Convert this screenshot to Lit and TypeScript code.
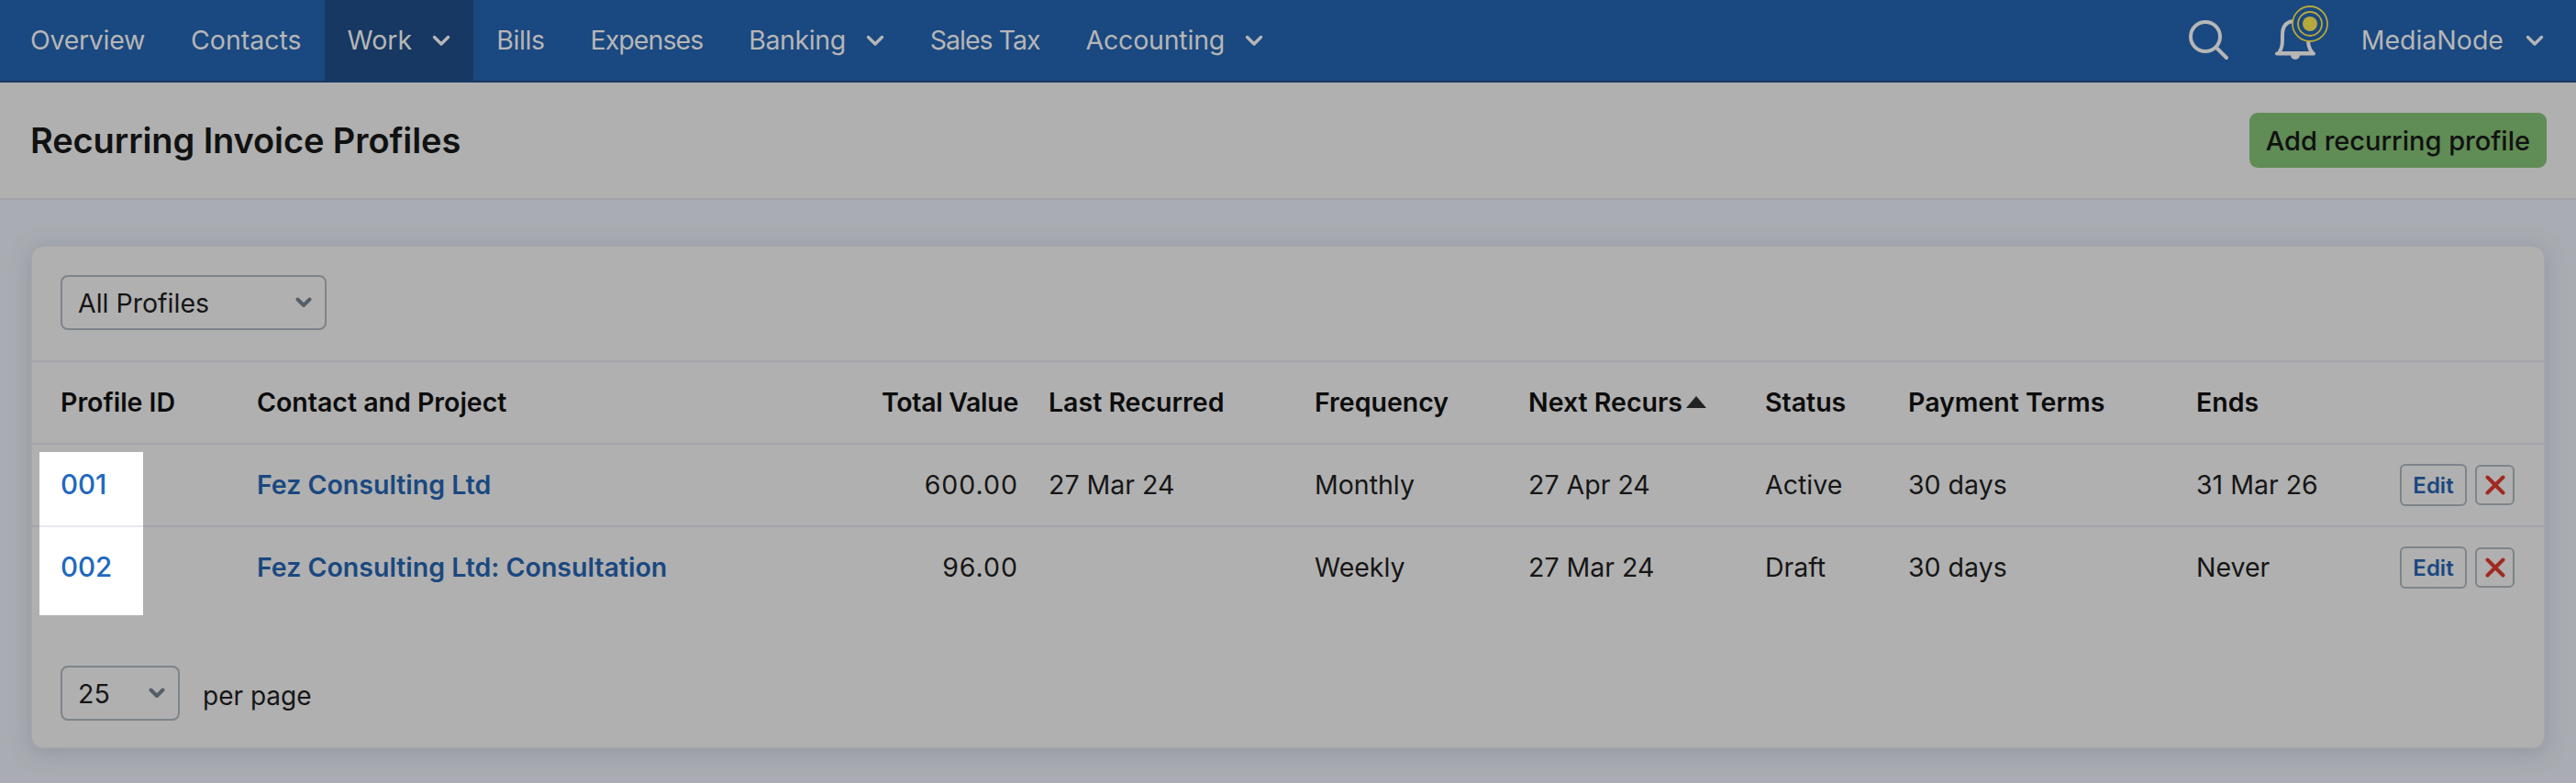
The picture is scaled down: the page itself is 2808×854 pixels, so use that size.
import { LitElement, html, css, svg } from "lit";
import { customElement } from "lit/decorators.js";

const chev = () => html`<svg class="chev" viewBox="0 0 20 13" width="20" height="13"><path d="M2.5 2.5 L10 10 L17.5 2.5" fill="none" stroke="currentColor" stroke-width="3.4" stroke-linecap="round" stroke-linejoin="round"/></svg>`;
const selChev = () => html`<svg class="selchev" viewBox="0 0 18 12" width="18" height="12"><path d="M2.5 2.5 L9 9 L15.5 2.5" fill="none" stroke="currentColor" stroke-width="4" stroke-linecap="round" stroke-linejoin="round"/></svg>`;

const nav = [
  { t: "Overview", ls: -0.3 }, { t: "Contacts", ls: 0 }, { t: "Work", c: true, a: true, ls: 0 }, { t: "Bills", ls: -0.4 },
  { t: "Expenses", ls: -0.95 }, { t: "Banking", c: true, ls: -0.4 }, { t: "Sales Tax", ls: -1 }, { t: "Accounting", c: true, ls: -0.2 },
];

const rows = [
  { id: "001", contact: "Fez Consulting Ltd", total: "600.00", last: "27 Mar 24", freq: "Monthly", next: "27 Apr 24", status: "Active", terms: "30 days", ends: "31 Mar 26" },
  { id: "002", contact: "Fez Consulting Ltd: Consultation", total: "96.00", last: "", freq: "Weekly", next: "27 Mar 24", status: "Draft", terms: "30 days", ends: "Never" },
];

@customElement("app-root")
export class AppRoot extends LitElement {
  static styles = css`
    :host { display: block; min-height: 854px; background: #a9acb2; font-family: Inter, "Noto Sans", sans-serif; font-size: 28.5px; color: #161616; }
    .nav { display: flex; align-items: stretch; height: 88px; background: #1a4880; border-bottom: 2px solid #163862; color: #b6b6b6; padding: 0 35px 0 8px; font-size: 28.5px; }
    .item { display: flex; align-items: center; gap: 22px; padding: 0 25px 2px 25px; box-sizing: border-box; }
    .item.active { background: #163862; }
    .item .chev { margin-top: 3px; }
    .right { margin-left: auto; display: flex; align-items: center; }
    .search { margin-right: 46px; }
    .bell { margin-right: 34px; margin-top: -16px; }
    .user { display: flex; align-items: center; gap: 24px; padding-bottom: 2px; }
    .user .chev { margin-top: 3px; }
    .head { display: flex; justify-content: space-between; align-items: center; height: 126px; padding: 0 32px 0 33px; background: #b0b0b0; border-bottom: 2px solid #a1a3a7; }
    h1 { margin: 0; font-size: 38px; font-weight: 600; color: #111; letter-spacing: -0.1px; }
    .add { background: #608c55; color: #111; height: 60px; display: flex; align-items: center; padding: 0 18px; border-radius: 9px; font-weight: 500; font-size: 29px; }
    .card { margin: 49px 33px 0; background: #b0b0b0; border: 2px solid #a3a5aa; border-radius: 14px; box-shadow: 0 4px 22px rgba(120, 125, 140, .45); }
    .filter { height: 124px; padding: 31px 0 0 31px; box-sizing: border-box; }
    .select { display: flex; align-items: center; justify-content: space-between; box-sizing: border-box; border: 2px solid #7e8489; border-radius: 8px; color: #161616; }
    .select .selchev { color: #555f68; }
    .select.all { width: 290px; height: 60px; padding: 0 14px 0 17px; }
    .select.size { width: 130px; height: 60px; padding: 0 14px 0 17px; }
    .table { position: relative; }
    .row { display: grid; grid-template-columns: 245px 560px 270px 323px 233px 258px 156px 314px 222px 125px 34px; height: 86px; padding-bottom: 2px; align-items: center; border-top: 2px solid #a3a4ab; }
    .row > * { min-width: 0; }
    .row.th { font-weight: 600; color: #0c0c0c; font-size: 28.5px; }
    .row.th .num { letter-spacing: -0.3px; }
    .pad { padding-left: 31px; position: relative; }
    .num { text-align: right; letter-spacing: 1px; }
    .gap { padding-left: 33px; }
    .id { color: #2068c0; font-weight: 500; font-size: 29.5px; }
    .contact { color: #1a4880; font-weight: 600; font-size: 28.5px; }
    .sort { display: flex; align-items: center; gap: 4px; }
    .tri { width: 0; height: 0; border-left: 11px solid transparent; border-right: 11px solid transparent; border-bottom: 13px solid #222; }
    .actions { display: flex; align-items: center; gap: 9px; margin-top: 2px; }
    .btn { box-sizing: border-box; display: flex; align-items: center; justify-content: center; border: 2px solid #7e8489; border-radius: 6px; }
    .edit { width: 73px; height: 46px; color: #1a4880; font-size: 24px; font-weight: 600; }
    .del { width: 43px; height: 44px; color: #a02a20; }
    .spot { position: absolute; left: 8px; top: 100px; width: 113px; height: 178px; background: #fff; }
    .spot i { display: block; position: absolute; left: 0; right: 0; top: 80px; height: 2px; background: #e8e8ee; }
    .foot { display: flex; align-items: center; gap: 25px; padding: 63px 0 29px 31px; }
    .per { margin-top: 5px; font-size: 28px; }
  `;

  render() {
    return html`
      <div class="nav">
        ${nav.map((n) => html`<div class="item ${n.a ? "active" : ""}"><span style="letter-spacing:${n.ls}px">${n.t}</span>${n.c ? chev() : ""}</div>`)}
        <div class="right">
          <svg class="search" width="50" height="50" viewBox="0 0 50 50"><circle cx="22" cy="21" r="16" fill="none" stroke="#b6b6b6" stroke-width="4"/><path d="M34 33 L45 44" stroke="#b6b6b6" stroke-width="4" stroke-linecap="round"/></svg>
          <svg class="bell" width="62" height="64" viewBox="0 0 62 64">
            ${svg`<path d="M6 54 C10 48 10 44 10 34 C10 24 15 19 24 19 C33 19 38 24 38 34 C38 44 38 48 43 54 Z" fill="none" stroke="#b6b6b6" stroke-width="4" stroke-linejoin="round"/>
            <path d="M4 54.5 H44" stroke="#b6b6b6" stroke-width="4" stroke-linecap="round"/>
            <path d="M19 56 A5 5 0 0 0 29 56 Z" fill="#b6b6b6"/>
            <circle cx="40" cy="22" r="19" fill="#1a4880" stroke="#b5a83c" stroke-width="1.8"/>
            <circle cx="40" cy="22" r="13" fill="none" stroke="#b5a83c" stroke-width="1.8"/>
            <circle cx="40" cy="22" r="8" fill="#b5a83c"/>`}
          </svg>
          <div class="user"><span>MediaNode</span>${chev()}</div>
        </div>
      </div>
      <div class="head">
        <h1>Recurring Invoice Profiles</h1>
        <div class="add">Add recurring profile</div>
      </div>
      <div class="card">
        <div class="filter"><div class="select all"><span>All Profiles</span>${selChev()}</div></div>
        <div class="table">
          <div class="spot"><i></i></div>
          <div class="row th">
            <div class="pad">Profile ID</div><div>Contact and Project</div><div class="num">Total Value</div>
            <div class="gap">Last Recurred</div><div>Frequency</div>
            <div class="sort"><span>Next Recurs</span><span class="tri"></span></div>
            <div>Status</div><div>Payment Terms</div><div>Ends</div><div></div><div></div>
          </div>
          ${rows.map((r) => html`<div class="row">
            <div class="pad id">${r.id}</div><div class="contact">${r.contact}</div><div class="num">${r.total}</div>
            <div class="gap">${r.last}</div><div>${r.freq}</div><div>${r.next}</div><div>${r.status}</div><div>${r.terms}</div><div>${r.ends}</div>
            <div class="actions"><div class="btn edit">Edit</div><div class="btn del"><svg width="22" height="22" viewBox="0 0 22 22"><path d="M2.5 2.5 L19.5 19.5 M19.5 2.5 L2.5 19.5" stroke="currentColor" stroke-width="4" stroke-linecap="round"/></svg></div></div>
            <div></div>
          </div>`)}
        </div>
        <div class="foot"><div class="select size"><span>25</span>${selChev()}</div><span class="per">per page</span></div>
      </div>
    `;
  }
}
